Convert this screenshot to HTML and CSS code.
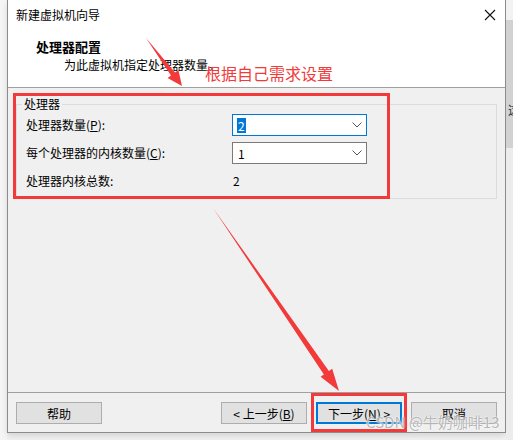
FILE: index.html
```html
<!DOCTYPE html>
<html lang="zh-CN">
<head>
    <meta charset="UTF-8">
    <meta name="viewport" content="width=device-width, initial-scale=1.0">
    <title>新建虚拟机向导</title>
    <link rel="stylesheet" href="styles.css">
</head>
<body>
    <div class="desk">
        <div class="side-left"></div>

        <div class="wizard">
            <div class="titlebar">
                <span class="title">新建虚拟机向导</span>
                <svg class="close" width="12" height="12" viewBox="0 0 12 12">
                    <path d="M1 1 L11 11 M11 1 L1 11" stroke="#111" stroke-width="1.1" fill="none"/>
                </svg>
            </div>

            <div class="header">
                <div class="header-title">处理器配置</div>
                <div class="header-sub">为此虚拟机指定处理器数量。</div>
            </div>

            <div class="content">
                <fieldset class="group">
                    <legend>处理器</legend>
                    <div class="rows">
                        <label>处理器数量(<u>P</u>):</label>
                        <div class="combo focused">
                            <span class="value selected">2</span>
                            <svg class="chevron" width="10" height="6" viewBox="0 0 10 6">
                                <path d="M0.5 0.5 L5 5 L9.5 0.5" stroke="#555" stroke-width="1" fill="none"/>
                            </svg>
                        </div>

                        <label>每个处理器的内核数量(<u>C</u>):</label>
                        <div class="combo">
                            <span class="value">1</span>
                            <svg class="chevron" width="10" height="6" viewBox="0 0 10 6">
                                <path d="M0.5 0.5 L5 5 L9.5 0.5" stroke="#555" stroke-width="1" fill="none"/>
                            </svg>
                        </div>

                        <label>处理器内核总数:</label>
                        <div class="total">2</div>
                    </div>
                </fieldset>
            </div>

            <div class="footer">
                <button type="button" class="btn">帮助</button>
                <div class="nav">
                    <button type="button" class="btn">&lt; 上一步(<u>B</u>)</button>
                    <button type="button" class="btn default">下一步(<u>N</u>) &gt;</button>
                    <button type="button" class="btn">取消</button>
                </div>
            </div>
        </div>

        <div class="side-right">
            <div class="strip-top"></div>
            <div class="strip-mid"><span class="peek">这</span></div>
            <div class="strip-bottom"></div>
        </div>
    </div>

    <!-- annotations drawn over the dialog -->
    <div class="note">根据自己需求设置</div>
    <div class="mark mark-group"></div>
    <div class="mark mark-next"></div>
    <svg class="arrows" width="513" height="440" viewBox="0 0 513 440">
        <polygon fill="#f23a3a" points="146,38 171,75.5 167.6,78 182,86 178.4,70 175,72.5"/>
        <polygon fill="#f23a3a" points="213,208 323.9,374.4 320.6,376.7 339,391 332.2,368.7 328.9,371"/>
    </svg>
    <div class="watermark">CSDN @牛奶咖啡13</div>
</body>
</html>
```

FILE: styles.css
```css
body {
    margin: 0;
    width: 513px;
    height: 440px;
    overflow: hidden;
    position: relative;
    background-color: #f2f2f2;
    font-family: "Noto Sans CJK SC", "Microsoft YaHei", sans-serif;
    font-size: 12px;
    color: #000;
}
.desk {
    display: flex;
    height: 440px;
}
.side-left {
    width: 7px;
    background-color: #f5f5f5;
}
.wizard {
    width: 497px;
    height: 432px;
    display: flex;
    flex-direction: column;
    border: 1px solid #8c8c8c;
    border-top: none;
    box-shadow: 0 3px 6px rgba(0, 0, 0, 0.12);
    background-color: #f0f0f0;
}
.side-right {
    width: 7px;
    display: flex;
    flex-direction: column;
}
.strip-top {
    height: 20px;
    background-color: #f2f2f2;
}
.strip-mid {
    height: 128px;
    background-color: #d2d2d2;
    overflow: hidden;
}
.peek {
    display: block;
    margin-top: 83px;
    margin-left: 2px;
    font-size: 12px;
    line-height: 14px;
    color: #333;
}
.strip-bottom {
    flex: 1;
    background-color: #ececec;
}
.titlebar {
    height: 30px;
    display: flex;
    align-items: center;
    justify-content: space-between;
    padding: 0 9px 0 8px;
    background-color: #fff;
}
.title {
    line-height: 16px;
}
.close {
    display: block;
}
.header {
    height: 58px;
    box-sizing: border-box;
    padding-left: 28px;
    background-color: #fff;
    border-bottom: 1px solid #a0a0a0;
}
.header-title {
    padding-top: 9px;
    font-size: 13px;
    font-weight: bold;
    line-height: 16px;
}
.header-sub {
    padding-left: 28px;
    padding-top: 2px;
    line-height: 16px;
}
.content {
    flex: 1;
    padding-top: 9px;
}
.group {
    margin: 0 0 0 8px;
    width: 481px;
    box-sizing: border-box;
    padding: 0 0 6px 0;
    border: 1px solid #dcdcdc;
}
.group legend {
    margin-left: 5px;
    padding: 0 2px;
    line-height: 14px;
}
.rows {
    display: grid;
    grid-template-columns: 206px 135px;
    row-gap: 6px;
    padding: 3px 0 0 9px;
    align-items: center;
}
.rows label {
    line-height: 22px;
}
.combo {
    height: 22px;
    box-sizing: border-box;
    border: 1px solid #7a7a7a;
    background-color: #fff;
    display: flex;
    align-items: center;
    justify-content: space-between;
    padding: 0 4px;
}
.combo.focused {
    border-color: #0078d7;
}
.value {
    line-height: 15px;
    padding: 0 1px;
}
.value.selected {
    background-color: #0078d7;
    color: #fff;
}
.total {
    line-height: 22px;
    padding-left: 1px;
}
.footer {
    height: 40px;
    box-sizing: border-box;
    border-top: 1px solid #a0a0a0;
    display: flex;
    justify-content: space-between;
    padding: 9px 8px 0 8px;
}
.nav {
    display: flex;
    gap: 9px;
}
.btn {
    width: 86px;
    height: 22px;
    box-sizing: border-box;
    border: 1px solid #adadad;
    background-color: #e1e1e1;
    font-family: inherit;
    font-size: 12px;
    color: #000;
    padding: 0;
}
.btn.default {
    border: 2px solid #0078d7;
}
.note {
    position: absolute;
    left: 205px;
    top: 62px;
    font-size: 16px;
    line-height: 22px;
    color: #f23a3a;
}
.mark {
    position: absolute;
    border: 3px solid #f23a3a;
    box-sizing: border-box;
}
.mark-group {
    left: 13px;
    top: 93px;
    width: 377px;
    height: 106px;
}
.mark-next {
    left: 311px;
    top: 393px;
    width: 96px;
    height: 39px;
}
.arrows {
    position: absolute;
    left: 0;
    top: 0;
    pointer-events: none;
}
.watermark {
    position: absolute;
    left: 366px;
    top: 412px;
    font-size: 15px;
    line-height: 20px;
    color: rgba(120, 120, 120, 0.55);
    text-shadow: 0 0 2px #fff, 0 0 1px #fff;
}
```
